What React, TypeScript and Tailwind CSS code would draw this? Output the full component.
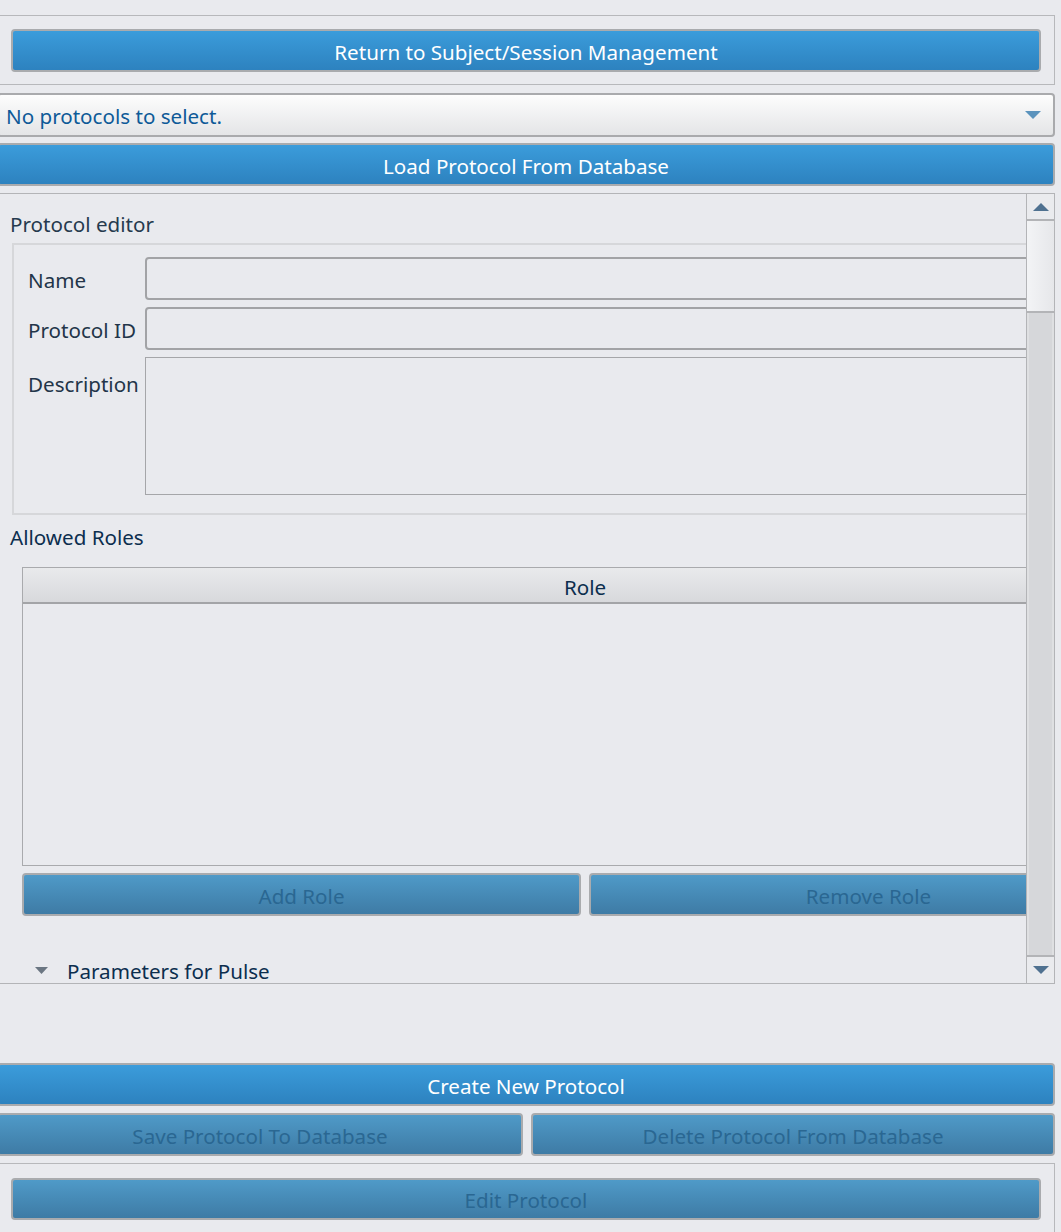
import React from "react";

const primary =
  "flex items-center justify-center pt-[3px] rounded-[4px] border-2 border-[#a9abae] bg-linear-to-b from-[#3b9cdb] to-[#2d82bf] text-white";
const disabled =
  "flex items-center justify-center pt-[3px] rounded-[4px] border-2 border-[#a9abae] bg-linear-to-b from-[#4f9ac8] to-[#3e7ba5] text-[#2a6792]";

function Tri({ dir, color, w, h }: { dir: "up" | "down"; color: string; w: number; h: number }) {
  return (
    <svg width={w} height={h} viewBox={`0 0 ${w} ${h}`}>
      {dir === "up" ? (
        <polygon points={`0,${h} ${w / 2},0 ${w},${h}`} fill={color} />
      ) : (
        <polygon points={`0,0 ${w},0 ${w / 2},${h}`} fill={color} />
      )}
    </svg>
  );
}

export default function App() {
  return (
    <div className="w-[1061px] h-[1232px] overflow-hidden bg-[#e9eaee] font-['Noto_Sans',sans-serif] text-[20.6px] leading-none">
      <div className="ml-[-3px] w-[1058px] pt-[15px] flex flex-col">
        {/* top group */}
        <div className="h-[70px] border border-[#b7b8bb] pl-[13px] pr-[13px] pt-[13px]">
          <div className={`${primary} h-[43px]`}>Return to Subject/Session Management</div>
        </div>

        {/* combobox */}
        <div className="mt-[8px] h-[44px] rounded-[4px] border-2 border-[#a9aaad] bg-linear-to-b from-[#fdfdfd] to-[#e4e5e7] flex items-center pl-[7px] pr-[12px]">
          <span className="flex-1 pt-[3px] text-[#0e5a98]">No protocols to select.</span>
          <Tri dir="down" color="#5b93bd" w={16} h={8} />
        </div>

        {/* load button */}
        <div className={`${primary} mt-[6px] h-[43px]`}>Load Protocol From Database</div>

        {/* scroll area */}
        <div className="mt-[7px] h-[791px] border border-[#b3b4b7] flex">
          <div className="w-[1028px] overflow-hidden">
            <div className="w-[1170px] pl-[12px] pt-[15px] flex flex-col">
              <div className="h-[28px] pt-[3px] flex items-center text-[#263a4e]">Protocol editor</div>
              <div className="mt-[6px] ml-[2px] w-[1156px] h-[272px] border-2 border-[#d6d7da] pl-[14px] pt-[12px] flex flex-col gap-[7px]">
                <div className="flex h-[43px]">
                  <div className="w-[117px] pt-[3px] flex items-center text-[#233549]">Name</div>
                  <div className="flex-1 rounded-[4px] border-2 border-[#a2a3a6]" />
                </div>
                <div className="flex h-[43px]">
                  <div className="w-[117px] pt-[3px] flex items-center text-[#233549]">Protocol ID</div>
                  <div className="flex-1 rounded-[4px] border-2 border-[#a2a3a6]" />
                </div>
                <div className="flex h-[138px]">
                  <div className="w-[117px] pt-[17px] text-[#233549]">Description</div>
                  <div className="flex-1 border border-[#a5a6a9]" />
                </div>
              </div>
              <div className="mt-[7px] h-[28px] pt-[3px] flex items-center text-[#0c2e4e]">Allowed Roles</div>
              <div className="mt-[17px] ml-[12px] w-[1126px] h-[299px] border border-[#a9aaad] flex flex-col">
                <div className="h-[36px] pt-[4px] bg-linear-to-b from-[#e9eaec] to-[#d8d9dc] border-b-2 border-[#a3a4a7] flex items-center justify-center text-[#0c2e4e]">
                  Role
                </div>
                <div className="flex-1" />
              </div>
              <div className="mt-[7px] ml-[12px] w-[1126px] h-[43px] flex gap-[8px]">
                <div className={`${disabled} flex-1`}>Add Role</div>
                <div className={`${disabled} flex-1`}>Remove Role</div>
              </div>
              <div className="mt-[40px] h-[28px] flex items-center text-[#0c2e4e]">
                <div className="ml-[25px] mr-[19px]">
                  <Tri dir="down" color="#6b7682" w={13} h={7} />
                </div>
                <span className="pt-[3px]">Parameters for Pulse</span>
              </div>
            </div>
          </div>
          {/* scrollbar */}
          <div className="w-[28px] border-l border-[#b3b4b7] flex flex-col bg-[#d6d7da]">
            <div className="h-[27px] bg-[#eaebee] border-b-2 border-[#b3b4b7] flex items-center justify-center">
              <Tri dir="up" color="#4f7190" w={16} h={8} />
            </div>
            <div className="h-[92px] bg-linear-to-r from-[#f3f4f6] to-[#e6e7ea] border-b-2 border-[#b3b4b7]" />
            <div className="flex-1 border-x-2 border-[#dfe0e2]" />
            <div className="h-[28px] bg-[#eaebee] border-t-2 border-[#b3b4b7] flex items-center justify-center">
              <Tri dir="down" color="#4f7190" w={16} h={8} />
            </div>
          </div>
        </div>

        {/* bottom buttons */}
        <div className={`${primary} mt-[79px] h-[43px]`}>Create New Protocol</div>
        <div className="mt-[7px] h-[43px] flex gap-[8px]">
          <div className={`${disabled} w-[526px]`}>Save Protocol To Database</div>
          <div className={`${disabled} flex-1`}>Delete Protocol From Database</div>
        </div>
        <div className="mt-[7px] h-[90px] border border-[#b7b8bb] pl-[13px] pr-[13px] pt-[14px]">
          <div className={`${disabled} h-[42px]`}>Edit Protocol</div>
        </div>
      </div>
    </div>
  );
}
